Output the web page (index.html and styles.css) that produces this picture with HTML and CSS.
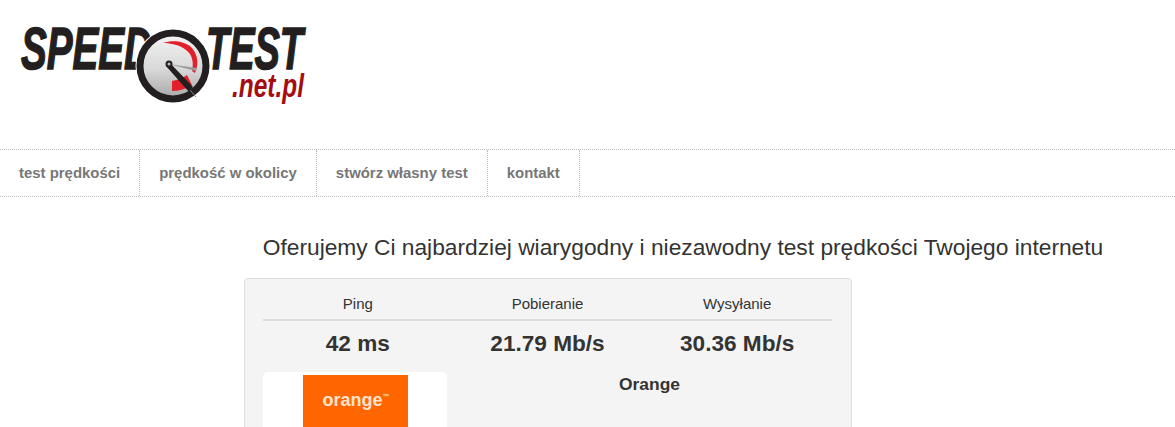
FILE: index.html
```html
<!DOCTYPE html>
<html lang="pl">
  <head>
    <meta charset="UTF-8" />
    <title>Test prędkości</title>
    <link rel="stylesheet" href="styles.css">
  </head>
  <body>
    <header class="logo-bar">
      <svg class="logo" width="330" height="120" viewBox="0 0 330 120">
        <defs>
          <linearGradient id="dial" x1="0" y1="0" x2="0" y2="1">
            <stop offset="0" stop-color="#f4f4f4"></stop>
            <stop offset="0.55" stop-color="#d8d8d8"></stop>
            <stop offset="1" stop-color="#a6a6a6"></stop>
          </linearGradient>
        </defs>
        <text class="logo-word" x="21" y="69" textLength="131" lengthAdjust="spacingAndGlyphs">SPEED</text>
        <text class="logo-word" x="206" y="69" textLength="97" lengthAdjust="spacingAndGlyphs">TEST</text>
        <text class="logo-net" x="232" y="97" textLength="72" lengthAdjust="spacingAndGlyphs">.net.pl</text>
        <circle cx="173" cy="66" r="37.5" fill="#ffffff"></circle>
        <circle cx="173" cy="66" r="33" fill="url(#dial)" stroke="#231f20" stroke-width="7"></circle>
        <path d="M163 43 C172 40 184 41 191 47 C198 54 199 64 195 73 L192 71 C194 62 192 54 186 50 C180 45 171 43 163 43 Z" fill="#e2202c"></path>
        <path d="M172 91 L172 81 C178 80 183 78 187 75 L192 85 C186 89 179 91 172 91 Z" fill="#e2202c"></path>
        <path d="M168 64 L197 68 L196 71 Z" fill="#9a9a9a"></path>
        <path d="M170 67 L196 97" stroke="#8a8a8a" stroke-width="1"></path>
        <path d="M166 66 L169 62 L193 87 L189 92 Z" fill="#231f20"></path>
        <circle cx="169" cy="64" r="3.5" fill="#231f20"></circle>
        <circle cx="169" cy="64" r="1.5" fill="#bbbbbb"></circle>
      </svg>
    </header>

    <nav class="main-nav">
      <a class="nav-link" href="#">test prędkości</a>
      <a class="nav-link" href="#">prędkość w okolicy</a>
      <a class="nav-link" href="#">stwórz własny test</a>
      <a class="nav-link" href="#">kontakt</a>
    </nav>

    <main class="content">
      <h1 class="title">Oferujemy Ci najbardziej wiarygodny i niezawodny test prędkości Twojego internetu</h1>
      <section class="result-card">
        <div class="result-row result-labels">
          <div>Ping</div>
          <div>Pobieranie</div>
          <div>Wysyłanie</div>
        </div>
        <div class="result-row result-values">
          <div>42 ms</div>
          <div>21.79 Mb/s</div>
          <div>30.36 Mb/s</div>
        </div>
        <div class="provider">
          <div class="provider-logo">
            <div class="orange-box">orange<sup class="tm">™</sup></div>
          </div>
          <div class="provider-name">Orange</div>
        </div>
      </section>
    </main>
  </body>
</html>
```

FILE: styles.css
```css
html,
body {
  margin: 0;
  height: 100%;
  overflow: hidden;
}

body {
  background-color: #ffffff;
  color: #333333;
  font-family: "Liberation Sans", Arial, sans-serif;
}

.logo-bar {
  height: 149px;
}

.logo {
  display: block;
}

.logo-word {
  font-family: "Liberation Sans", Arial, sans-serif;
  font-size: 59px;
  font-weight: 700;
  font-style: italic;
  fill: #231f20;
  stroke: #231f20;
  stroke-width: 1.5px;
}

.logo-net {
  font-family: "Liberation Sans", Arial, sans-serif;
  font-size: 34px;
  font-weight: 700;
  font-style: italic;
  fill: #a50d12;
}

.main-nav {
  display: flex;
  height: 46px;
  border-top: 1px dotted #bbbbbb;
  border-bottom: 1px dotted #bbbbbb;
}

.nav-link {
  display: flex;
  align-items: center;
  padding: 0 19px 1px;
  border-right: 1px dotted #bbbbbb;
  color: #777777;
  font-size: 14.93px;
  font-weight: 700;
  text-decoration: none;
}

.content {
  width: 878px;
  margin-left: 244px;
}

.title {
  margin: 37px 0 18px;
  font-size: 22.75px;
  font-weight: 400;
  line-height: 26px;
  text-align: center;
}

.result-card {
  box-sizing: border-box;
  width: 608px;
  padding: 16px 19px 0 18px;
  background-color: #f4f4f4;
  border: 1px solid #dddddd;
  border-radius: 4px;
}

.result-row {
  display: grid;
  grid-template-columns: repeat(3, 1fr);
  text-align: center;
}

.result-labels {
  padding-bottom: 6px;
  border-bottom: 2px solid #dddddd;
  font-size: 15px;
  line-height: 18px;
}

.result-values {
  margin-top: 10px;
  font-size: 22.6px;
  font-weight: 700;
  line-height: 26px;
}

.provider {
  display: flex;
  gap: 18px;
  margin-top: 15px;
}

.provider-logo {
  display: flex;
  justify-content: center;
  width: 184px;
  height: 120px;
  padding-top: 3px;
  background-color: #ffffff;
  border-radius: 5px;
}

.orange-box {
  width: 105px;
  height: 105px;
  padding: 14px 0 0 2px;
  box-sizing: border-box;
  background-color: #ff6600;
  color: #ffe3cc;
  font-size: 18px;
  font-weight: 700;
  line-height: 22px;
  text-align: center;
}

.tm {
  font-size: 7px;
  line-height: 0;
}

.provider-name {
  flex: 1;
  padding-left: 2px;
  font-size: 17.4px;
  font-weight: 700;
  line-height: 24px;
  text-align: center;
}
```
